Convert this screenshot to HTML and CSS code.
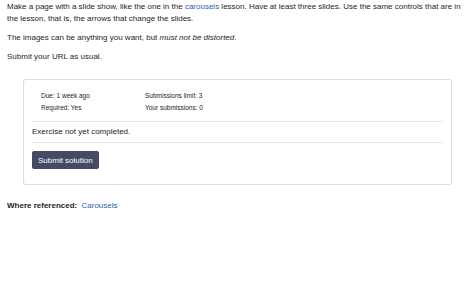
FILE: index.html
```html
<!DOCTYPE html>
<html lang="en">
<head>
  <meta charset="UTF-8">
  <meta name="viewport" content="width=device-width, initial-scale=1.0">
  <title>Exercise</title>
  <link rel="stylesheet" href="styles.css">
</head>
<body>
  <div class="exercise">
    <p>Make a page with a slide show, like the one in the <a href="#">carousels</a> lesson. Have at least three slides. Use the same controls that are in the lesson, that is, the arrows that change the slides.</p>
    <p>The images can be anything you want, but <em>must not be distorted</em>.</p>
    <p>Submit your URL as usual.</p>

    <div class="card">
      <div class="meta">
        <div class="meta-col">
          <div>Due: 1 week ago</div>
          <div>Required: Yes</div>
        </div>
        <div class="meta-col">
          <div>Submissions limit: 3</div>
          <div>Your submissions: 0</div>
        </div>
      </div>
      <hr>
      <div class="status">Exercise not yet completed.</div>
      <hr>
      <button class="submit-button">Submit solution</button>
    </div>

    <div class="referenced">
      <strong>Where referenced:</strong> <a href="#">Carousels</a>
    </div>
  </div>
</body>
</html>
```

FILE: styles.css
```css
body {
  margin: 0;
  padding: 1px 7px;
  font-family: "Liberation Sans", Arial, sans-serif;
  font-size: 8px;
  line-height: 12px;
  color: #1f2226;
  background-color: #ffffff;
}

p {
  margin: 0 0 7px;
}

a {
  color: #1f5fae;
  text-decoration: none;
}

.card {
  margin: 16px 15px 0 16px;
  border: 1px solid #dcdcdc;
  border-radius: 3px;
  padding: 10px 8px 15px;
}

.meta {
  display: flex;
  padding: 0 0 3px 9px;
  font-size: 6.5px;
  line-height: 12px;
}

.meta-col {
  width: 104px;
}

hr {
  border: none;
  border-top: 1px solid #e6e6e6;
  margin: 4px 0;
}

.status {
  line-height: 12px;
}

.submit-button {
  display: block;
  margin-top: 8px;
  background-color: #444b67;
  color: #ffffff;
  border: none;
  border-radius: 2px;
  font-family: "Liberation Sans", Arial, sans-serif;
  font-size: 8px;
  height: 18px;
  padding: 0 6px;
}

.referenced {
  margin-top: 15px;
}

.referenced strong {
  margin-right: 2px;
}
```
